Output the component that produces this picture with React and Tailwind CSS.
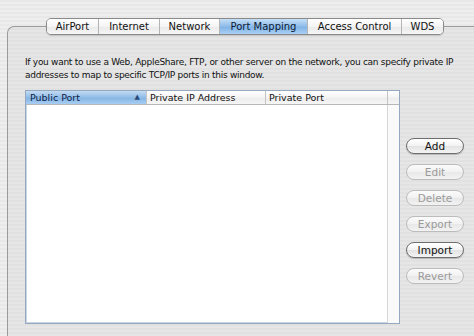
import React from "react";

const tabs = [
  { label: "AirPort", w: "w-[51px]" },
  { label: "Internet", w: "w-[61px]" },
  { label: "Network", w: "w-[60px]" },
  { label: "Port Mapping", w: "w-[88px]", active: true },
  { label: "Access Control", w: "w-[94px]" },
  { label: "WDS", w: "w-[42px]" },
];

const buttons = [
  { label: "Add", on: true },
  { label: "Edit" },
  { label: "Delete" },
  { label: "Export" },
  { label: "Import", on: true },
  { label: "Revert" },
];

export default function App() {
  return (
    <div className="w-[474px] h-[336px] overflow-hidden bg-[#ececec] bg-[repeating-linear-gradient(0deg,#eeeeee_0px,#eeeeee_2px,#e8e8e8_2px,#e8e8e8_4px)] pt-[26px] pl-[7px] font-['Lucida_Grande','DejaVu_Sans',sans-serif] text-[#111]">
      <div className="w-[480px] h-[330px] border-l border-t border-[#9a9a9a] rounded-tl-[7px] bg-[#e4e4e4] bg-[repeating-linear-gradient(0deg,#e6e6e6_0px,#e6e6e6_2px,#e1e1e1_2px,#e1e1e1_4px)]">
        <div className="-mt-[9px] ml-[38px] flex h-[17px] w-max rounded-[5px] border border-[#8a8a8a] overflow-hidden shadow-[0_1px_1px_rgba(0,0,0,0.15)]">
          {tabs.map((t, i) => (
            <div
              key={t.label}
              className={`${t.w} flex items-center justify-center text-[10px] leading-none ${i > 0 ? "border-l border-[#b4b4b4]" : ""} ${
                t.active
                  ? "bg-[linear-gradient(#c6dff6,#8dbbe9_50%,#7fb1e4_51%,#a9d0f5)] text-[#0b1a33]"
                  : "bg-[linear-gradient(#ffffff,#f4f4f4_50%,#e9e9e9_51%,#f6f6f6)] text-[#111]"
              }`}
            >
              {t.label}
            </div>
          ))}
        </div>

        <div className="pl-[17px]">
          <p className="mt-[21px] text-[9px] tracking-[-0.28px] leading-[13px] whitespace-nowrap text-[#111]">
            If you want to use a Web, AppleShare, FTP, or other server on the network, you can specify private IP
            <br />
            addresses to map to specific TCP/IP ports in this window.
          </p>

          <div className="mt-[8px] flex">
            <div className="w-[375px] h-[234px] border border-[#94a8c0] shadow-[inset_0_0_0_1px_#c9d5e2] bg-white flex flex-col">
              <div className="flex h-[14px] border-b border-[#b8b8b8] text-[9.5px] leading-none">
                <div className="w-[120px] flex items-center justify-between pl-[4px] pr-[6px] bg-[linear-gradient(#c3dbf3,#90bce8_50%,#82b3e3_51%,#a7cdf2)] text-[#0d2047]">
                  <span>Public Port</span>
                  <span className="text-[7px] text-[#2a4a78]">▲</span>
                </div>
                <div className="w-[119px] flex items-center pl-[3px] border-l border-[#c4c4c4] bg-[linear-gradient(#ffffff,#f3f3f3_50%,#ebebeb_51%,#f6f6f6)]">
                  Private IP Address
                </div>
                <div className="w-[122px] flex items-center pl-[3px] border-l border-[#c4c4c4] bg-[linear-gradient(#ffffff,#f3f3f3_50%,#ebebeb_51%,#f6f6f6)]">
                  Private Port
                </div>
                <div className="flex-1 border-l border-[#c4c4c4] bg-[linear-gradient(#ffffff,#f3f3f3_50%,#ebebeb_51%,#f6f6f6)]" />
              </div>
              <div className="flex-1 flex">
                <div className="w-[361px]" />
                <div className="flex-1 border-l border-[#d6d6d6] bg-[#fafafa]" />
              </div>
            </div>

            <div className="ml-[6px] pt-[48px] flex flex-col gap-[10px]">
              {buttons.map((b) => (
                <div
                  key={b.label}
                  className={`w-[58px] h-[16px] rounded-full flex items-center justify-center text-[10.5px] leading-none ${
                    b.on
                      ? "border border-[#6e6e6e] text-[#111] bg-[linear-gradient(#ffffff,#f2f2f2_50%,#e2e2e2_51%,#f4f4f4)] shadow-[0_1px_1px_rgba(0,0,0,0.2)]"
                      : "border border-[#bcbcbc] text-[#9a9a9a] bg-[linear-gradient(#fbfbfb,#f1f1f1_50%,#e8e8e8_51%,#f2f2f2)]"
                  }`}
                >
                  {b.label}
                </div>
              ))}
            </div>
          </div>
        </div>
      </div>
    </div>
  );
}
